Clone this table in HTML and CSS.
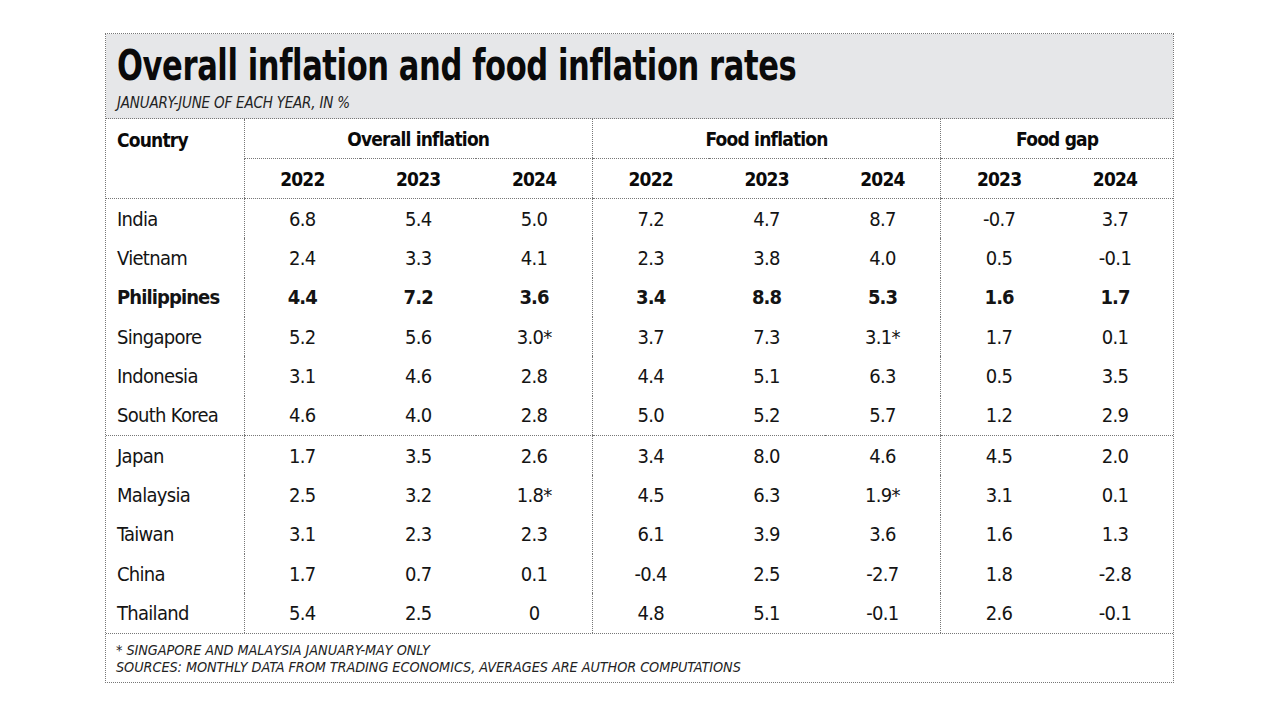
FILE: index.html
```html
<!DOCTYPE html>
<html>
<head>
<meta charset="utf-8">
<link rel="stylesheet" href="styles.css">
</head>
<body>
<div class="chart">
  <div class="title-block">
    <h1 class="title">Overall inflation and food inflation rates</h1>
    <div class="subtitle">JANUARY-JUNE OF EACH YEAR, IN %</div>
  </div>
  <table class="data">
    <colgroup>
      <col class="c-country">
      <col class="c-val"><col class="c-val"><col class="c-val">
      <col class="c-val"><col class="c-val"><col class="c-val">
      <col class="c-val"><col class="c-val">
    </colgroup>
    <thead>
      <tr class="h1">
        <th class="country" rowspan="2">Country</th>
        <th colspan="3" class="grp">Overall inflation</th>
        <th colspan="3" class="grp">Food inflation</th>
        <th colspan="2" class="grp last">Food gap</th>
      </tr>
      <tr class="h2">
        <th class="gl">2022</th><th>2023</th><th>2024</th>
        <th class="gl">2022</th><th>2023</th><th>2024</th>
        <th class="gl">2023</th><th>2024</th>
      </tr>
    </thead>
    <tbody>
      <tr><td class="country">India</td><td class="gl">6.8</td><td>5.4</td><td>5.0</td><td class="gl">7.2</td><td>4.7</td><td>8.7</td><td class="gl">-0.7</td><td>3.7</td></tr>
      <tr><td class="country">Vietnam</td><td class="gl">2.4</td><td>3.3</td><td>4.1</td><td class="gl">2.3</td><td>3.8</td><td>4.0</td><td class="gl">0.5</td><td>-0.1</td></tr>
      <tr class="bold"><td class="country">Philippines</td><td class="gl">4.4</td><td>7.2</td><td>3.6</td><td class="gl">3.4</td><td>8.8</td><td>5.3</td><td class="gl">1.6</td><td>1.7</td></tr>
      <tr><td class="country">Singapore</td><td class="gl">5.2</td><td>5.6</td><td>3.0*</td><td class="gl">3.7</td><td>7.3</td><td>3.1*</td><td class="gl">1.7</td><td>0.1</td></tr>
      <tr><td class="country">Indonesia</td><td class="gl">3.1</td><td>4.6</td><td>2.8</td><td class="gl">4.4</td><td>5.1</td><td>6.3</td><td class="gl">0.5</td><td>3.5</td></tr>
      <tr class="sep"><td class="country">South Korea</td><td class="gl">4.6</td><td>4.0</td><td>2.8</td><td class="gl">5.0</td><td>5.2</td><td>5.7</td><td class="gl">1.2</td><td>2.9</td></tr>
      <tr><td class="country">Japan</td><td class="gl">1.7</td><td>3.5</td><td>2.6</td><td class="gl">3.4</td><td>8.0</td><td>4.6</td><td class="gl">4.5</td><td>2.0</td></tr>
      <tr><td class="country">Malaysia</td><td class="gl">2.5</td><td>3.2</td><td>1.8*</td><td class="gl">4.5</td><td>6.3</td><td>1.9*</td><td class="gl">3.1</td><td>0.1</td></tr>
      <tr><td class="country">Taiwan</td><td class="gl">3.1</td><td>2.3</td><td>2.3</td><td class="gl">6.1</td><td>3.9</td><td>3.6</td><td class="gl">1.6</td><td>1.3</td></tr>
      <tr><td class="country">China</td><td class="gl">1.7</td><td>0.7</td><td>0.1</td><td class="gl">-0.4</td><td>2.5</td><td>-2.7</td><td class="gl">1.8</td><td>-2.8</td></tr>
      <tr><td class="country">Thailand</td><td class="gl">5.4</td><td>2.5</td><td>0</td><td class="gl">4.8</td><td>5.1</td><td>-0.1</td><td class="gl">2.6</td><td>-0.1</td></tr>
    </tbody>
  </table>
  <div class="notes">
    <div>* SINGAPORE AND MALAYSIA JANUARY-MAY ONLY</div>
    <div>SOURCES: MONTHLY DATA FROM TRADING ECONOMICS, AVERAGES ARE AUTHOR COMPUTATIONS</div>
  </div>
</div>
</body>
</html>
```
FILE: styles.css
```css
html, body {
  margin: 0;
  padding: 0;
  background: #ffffff;
}
body {
  font-family: "DejaVu Sans Condensed", "DejaVu Sans", "Liberation Sans", sans-serif;
  color: #141414;
}
.chart {
  margin: 33px 0 0 105px;
  width: 1069px;
  height: 650px;
  box-sizing: border-box;
  border: 1px dotted #777;
  display: flex;
  flex-direction: column;
}
.title-block {
  background: #e6e7e9;
  height: 85px;
  flex: none;
  box-sizing: border-box;
  border-bottom: 1px dotted #777;
  padding: 8px 0 0 11px;
}
.title {
  margin: 0;
  font-size: 43px;
  line-height: 46px;
  font-weight: bold;
  letter-spacing: -0.5px;
  color: #0a0a0a;
  white-space: nowrap;
  transform: scaleX(0.79);
  transform-origin: left center;
}
.subtitle {
  font-style: italic;
  font-size: 15px;
  letter-spacing: -0.2px;
  line-height: 18px;
  margin-top: 6px;
  color: #222;
}
.data {
  border-collapse: collapse;
  table-layout: fixed;
  width: 1067px;
  flex: none;
}
.c-country { width: 138px; }
.c-val { width: 116.125px; }
.data th, .data td {
  padding: 0;
  text-align: center;
  white-space: nowrap;
}
.data th {
  font-weight: bold;
  font-size: 19px;
  letter-spacing: -0.8px;
  height: 39px;
  color: #0a0a0a;
}
.data td {
  font-size: 20px;
  letter-spacing: -0.7px;
  height: 39.35px;
}
.data .country {
  text-align: left;
  padding-left: 11px;
  vertical-align: top;
}
.data th.country {
  padding-top: 10px;
  box-sizing: border-box;
}
.data td.country {
  vertical-align: middle;
}
.h1 th.grp {
  border-left: 1px dotted #777;
  border-bottom: 1px dotted #777;
}
.h2 th {
  border-bottom: 1px dotted #777;
}
.data th.country {
  border-bottom: 1px dotted #777;
}
.gl {
  border-left: 1px dotted #777;
}
.bold td {
  font-weight: bold;
  letter-spacing: -0.9px;
}
.sep td {
  border-bottom: 1px dotted #777;
}
.notes {
  flex: 1;
  border-top: 1px dotted #777;
  padding: 8px 0 0 10px;
  font-style: italic;
  font-size: 14.3px;
  letter-spacing: -0.05px;
  line-height: 17px;
  color: #222;
}
```
